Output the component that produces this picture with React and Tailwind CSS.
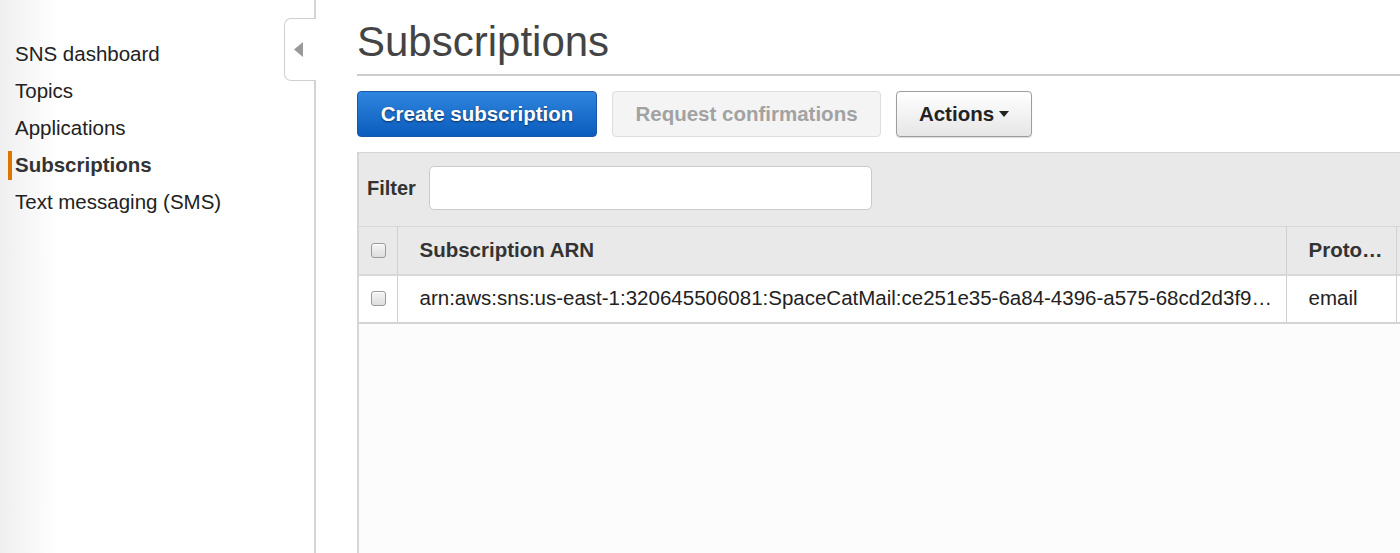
import React from "react";

const navItems = [
  { label: "SNS dashboard" },
  { label: "Topics" },
  { label: "Applications" },
  { label: "Subscriptions", active: true },
  { label: "Text messaging (SMS)" },
];

function Checkbox() {
  return (
    <span className="block h-[15px] w-[15px] rounded-[3px] border border-[#9a9a9a] bg-[linear-gradient(#f4f4f4,#dedede)] shadow-[inset_0_1px_0_#fff]" />
  );
}

function Sidebar() {
  return (
    <aside className="relative h-full w-[316px] shrink-0 border-r-2 border-[#d4d4d4] bg-[linear-gradient(to_right,#efefef,#ffffff_58px)]">
      <nav className="flex flex-col pt-[36px]">
        {navItems.map((item) => (
          <div key={item.label} className="flex h-[37px] items-center">
            <span
              className={`ml-[8px] mr-[3px] h-[29px] w-[4px] ${
                item.active ? "bg-[#e07400]" : "bg-transparent"
              }`}
            />
            <span
              className={`text-[20.5px] ${
                item.active ? "font-bold text-[#333]" : "text-[#222]"
              }`}
            >
              {item.label}
            </span>
          </div>
        ))}
      </nav>
      {/* collapse tab sits over the border */}
      <button
        type="button"
        className="absolute right-[-2px] top-[18px] flex h-[63px] w-[32px] items-center justify-center rounded-l-[7px] border border-r-0 border-[#cfcfcf] bg-white"
      >
        <svg width="9" height="15" viewBox="0 0 9 15" className="mr-[4px]">
          <path d="M9 0 L0 7.5 L9 15 Z" fill="#999" />
        </svg>
      </button>
    </aside>
  );
}

function Toolbar() {
  return (
    <div className="mt-[15px] flex gap-[15px]">
      <button
        type="button"
        className="h-[46px] w-[240px] rounded-[4px] border border-[#1757a6] bg-[linear-gradient(#2f86de,#0b5cbd)] text-[20.5px] font-bold text-white [text-shadow:0_1px_2px_rgba(0,0,0,0.55)]"
      >
        Create subscription
      </button>
      <button
        type="button"
        disabled
        className="h-[46px] w-[269px] rounded-[4px] border border-[#dedede] bg-[#f4f4f4] text-[20.5px] font-bold text-[#a2a2a2]"
      >
        Request confirmations
      </button>
      <button
        type="button"
        className="flex h-[46px] w-[136px] items-center justify-center gap-[5px] rounded-[4px] border border-[#9d9d9d] bg-[linear-gradient(#ffffff,#e6e6e6)] text-[20.5px] font-bold text-[#222] shadow-[0_1px_1px_rgba(0,0,0,0.15)]"
      >
        Actions
        <svg width="10" height="6" viewBox="0 0 10 6">
          <path d="M0 0 L10 0 L5 6 Z" fill="#222" />
        </svg>
      </button>
    </div>
  );
}

function SubscriptionsPanel() {
  return (
    <div className="mt-[15px] flex w-[1200px] flex-1 flex-col border-l-2 border-t border-[#d6d6d6] bg-[#fcfcfc]">
      <div className="flex h-[73px] items-center bg-[#e9e9e9] pb-[4px] pl-[8px]">
        <span className="text-[20px] font-bold text-[#333]">Filter</span>
        <input
          type="text"
          className="ml-[13px] h-[44px] w-[443px] rounded-[5px] border border-[#cacaca] bg-white px-3 text-[18px] outline-none"
        />
      </div>
      <table className="w-full table-fixed border-collapse text-[20.5px] text-[#222]">
        <colgroup>
          <col className="w-[38px]" />
          <col className="w-[889px]" />
          <col className="w-[110px]" />
          <col />
        </colgroup>
        <thead>
          <tr className="h-[48px] border-b-2 border-t border-[#d8d8d8] bg-[#e9e9e9]">
            <th className="border-r border-[#d0d0d0] pl-[12px]">
              <Checkbox />
            </th>
            <th className="border-r border-[#d0d0d0] pl-[22px] text-left font-bold text-[#333]">
              Subscription ARN
            </th>
            <th className="truncate border-r border-[#d0d0d0] pl-[22px] pr-[6px] text-left font-bold text-[#333]">
              Protocol
            </th>
            <th />
          </tr>
        </thead>
        <tbody>
          <tr className="h-[48px] border-b-2 border-[#d4d4d4] bg-white">
            <td className="border-r border-[#d0d0d0] pl-[12px]">
              <Checkbox />
            </td>
            <td className="truncate border-r border-[#d0d0d0] pl-[22px] pr-[3px]">
              arn:aws:sns:us-east-1:320645506081:SpaceCatMail:ce251e35-6a84-4396-a575-68cd2d3f91b7
            </td>
            <td className="border-r border-[#d0d0d0] pl-[22px]">email</td>
            <td />
          </tr>
        </tbody>
      </table>
    </div>
  );
}

export default function App() {
  return (
    <div className="flex h-[553px] w-full overflow-hidden bg-white font-['Liberation_Sans',Arial,sans-serif]">
      <Sidebar />
      <main className="flex min-w-0 flex-1 flex-col overflow-hidden pl-[41px]">
        <h1 className="mt-[18px] text-[42px] font-normal leading-[48px] text-[#444]">
          Subscriptions
        </h1>
        <div className="mt-[8px] h-[2px] w-full shrink-0 bg-[#cdcdcd]" />
        <Toolbar />
        <SubscriptionsPanel />
      </main>
    </div>
  );
}
